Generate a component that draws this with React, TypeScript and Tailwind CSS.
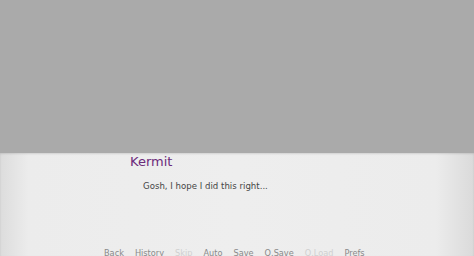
export default function App() {
  const menu = [
    { label: 'Back', on: true },
    { label: 'History', on: true },
    { label: 'Skip', on: false },
    { label: 'Auto', on: true },
    { label: 'Save', on: true },
    { label: 'Q.Save', on: true },
    { label: 'Q.Load', on: false },
    { label: 'Prefs', on: true },
  ];

  return (
    <div className="w-[474px] h-[256px] overflow-hidden flex flex-col font-['DejaVu_Sans',sans-serif]">
      {/* scene */}
      <div className="h-[153px] bg-[#aaaaaa] shrink-0" />

      {/* textbox */}
      <div className="relative flex-1 bg-[linear-gradient(to_right,#dcdcdc_0%,#ececec_6%,#eeeeee_50%,#ececec_92%,#dadada_100%)] shadow-[inset_0_1px_2px_rgba(0,0,0,0.12)]">
        <div className="pl-[130px] pt-[1px] text-[13px] leading-[16px] text-[#6b2b7b]">Kermit</div>
        <div className="pl-[143px] pt-[10px] text-[8.6px] leading-[12px] text-[#454545]">
          Gosh, I hope I did this right...
        </div>

        <div className="absolute left-0 right-0 top-[94px] flex gap-[11px] pl-[104px] text-[8.2px] leading-[12px]">
          {menu.map((m) => (
            <span key={m.label} className={m.on ? 'text-[#8a8a8a]' : 'text-[#d0d0d0]'}>
              {m.label}
            </span>
          ))}
        </div>
      </div>
    </div>
  );
}
